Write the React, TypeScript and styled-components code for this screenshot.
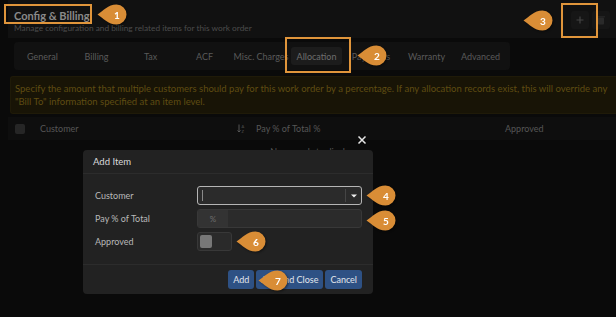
import React from "react";
import styled, { createGlobalStyle } from "styled-components";

const Global = createGlobalStyle`
  html, body { margin: 0; padding: 0; background: #0a0a0a; }
  body { font-family: Lato, "Open Sans", sans-serif; }
  * { box-sizing: border-box; }
  svg { display: block; }
`;

const Page = styled.div`
  position: relative;
  width: 616px;
  height: 317px;
  overflow: hidden;
  background: #0a0a0a;
  display: flex;
  flex-direction: column;
  padding-left: 8px;
`;

const Header = styled.div`
  height: 38px;
  background: #111111;
  display: flex;
  align-items: flex-start;
  justify-content: space-between;
  padding: 9px 6px 0 6px;
`;

const TitleBlock = styled.div`
  display: flex;
  flex-direction: column;
`;

const Title = styled.div`
  font-size: 11px;
  font-weight: 700;
  color: #8a8a8a;
  line-height: 13px;
`;

const Subtitle = styled.div`
  font-size: 8.3px;
  color: #4c4c4c;
  line-height: 12px;
`;

const Actions = styled.div`
  display: flex;
  gap: 3px;
  margin-top: 2px;
`;

const IconButton = styled.div`
  width: 18px;
  height: 18px;
  border-radius: 3px;
  background: #161616;
  display: flex;
  align-items: center;
  justify-content: center;
`;

const TabsRow = styled.div`
  margin: 4px 0 0 6px;
  width: 496px;
  height: 28px;
  background: #111111;
  border-radius: 4px;
  display: flex;
  align-items: center;
  padding-left: 2px;
  gap: 1px;
`;

const Tab = styled.div<{ $active?: boolean; $w: number }>`
  width: ${(p) => p.$w}px;
  height: 18px;
  border-radius: 3px;
  display: flex;
  align-items: center;
  justify-content: center;
  font-size: 9px;
  white-space: nowrap;
  color: ${(p) => (p.$active ? "#6e6e6e" : "#5a5a5a")};
  background: ${(p) => (p.$active ? "#1c1c1c" : "transparent")};
`;

const Warning = styled.div`
  margin: 6px 0 0 2px;
  height: 38px;
  background: #181406;
  border: 1px solid #1f1a08;
  border-right: none;
  border-radius: 3px 0 0 3px;
  padding: 5px 0 0 4px;
  font-size: 9.5px;
  line-height: 13px;
  color: #5f4c12;
  white-space: nowrap;
`;

const TableHeader = styled.div`
  margin-top: 3px;
  height: 23px;
  background: #0e0e0e;
  display: flex;
  align-items: center;
  font-size: 9px;
  color: #565656;
`;

const Check = styled.div`
  width: 10px;
  height: 10px;
  border-radius: 2px;
  background: #262626;
  margin-left: 7px;
  margin-right: 15px;
`;

const HeadCell = styled.div<{ $w: number }>`
  width: ${(p) => p.$w}px;
  display: flex;
  align-items: center;
  gap: 10px;
`;

const TableBody = styled.div`
  flex: 1;
  display: flex;
  justify-content: center;
  padding: 6px 0 0 0;
  font-size: 9px;
  color: #555;
`;

/* ---------- overlays ---------- */

const Dialog = styled.div`
  position: absolute;
  left: 83px;
  top: 150px;
  width: 290px;
  height: 144px;
  background: #222222;
  border-radius: 4px;
  display: flex;
  flex-direction: column;
`;

const DialogHead = styled.div`
  height: 24px;
  border-bottom: 1px solid #2c2c2c;
  padding: 0 10px;
  display: flex;
  align-items: center;
  font-size: 9.5px;
  color: #dadada;
`;

const DialogBody = styled.div`
  flex: 1;
  padding: 12px 11px 0 12px;
  display: flex;
  flex-direction: column;
  gap: 4px;
  border-bottom: 1px solid #2c2c2c;
`;

const FieldRow = styled.div`
  display: flex;
  align-items: center;
  height: 19px;
`;

const Label = styled.div`
  width: 102px;
  font-size: 9px;
  color: #b8b8b8;
`;

const Input = styled.div<{ $focused?: boolean }>`
  width: 165px;
  height: 19px;
  border-radius: 3px;
  background: #2b2b2b;
  border: 1px solid ${(p) => (p.$focused ? "#b5b5b5" : "#383838")};
  display: flex;
  align-items: center;
  overflow: hidden;
`;

const Caret = styled.div`
  width: 1px;
  height: 11px;
  background: #8a8a8a;
  margin-left: 4px;
`;

const Spacer = styled.div`
  flex: 1;
`;

const DropSep = styled.div`
  width: 1px;
  height: 13px;
  background: #454545;
`;

const DropArrow = styled.div`
  width: 15px;
  display: flex;
  justify-content: center;
`;

const Addon = styled.div`
  width: 30px;
  height: 100%;
  background: #333333;
  color: #6e6e6e;
  font-size: 8px;
  display: flex;
  align-items: center;
  justify-content: center;
`;

const Toggle = styled.div`
  width: 35px;
  height: 19px;
  border-radius: 3px;
  background: #2a2a2a;
  border: 1px solid #383838;
  padding: 2px;
  display: flex;
`;

const Knob = styled.div`
  width: 12px;
  height: 100%;
  border-radius: 2px;
  background: #777777;
`;

const DialogFoot = styled.div`
  height: 29px;
  display: flex;
  justify-content: flex-end;
  align-items: center;
  gap: 2px;
  padding: 0 11px 0 0;
`;

const Button = styled.div`
  height: 19px;
  padding: 0 5px;
  border-radius: 3px;
  background: #2e5184;
  color: #e2e6ec;
  font-size: 9px;
  display: flex;
  align-items: center;
`;

const Close = styled.div`
  position: absolute;
  left: 357px;
  top: 135px;
  width: 10px;
  height: 10px;
  display: flex;
`;

const Highlight = styled.div<{ $x: number; $y: number; $w: number; $h: number }>`
  position: absolute;
  left: ${(p) => p.$x}px;
  top: ${(p) => p.$y}px;
  width: ${(p) => p.$w}px;
  height: ${(p) => p.$h}px;
  border: 2px solid #e0953b;
`;

const MarkerWrap = styled.div<{ $x: number; $y: number }>`
  position: absolute;
  left: ${(p) => p.$x}px;
  top: ${(p) => p.$y}px;
  width: 30px;
  height: 21px;
  filter: drop-shadow(1px 1px 1px rgba(0, 0, 0, 0.45));
`;

const MarkerNum = styled.div`
  position: absolute;
  left: 10px;
  top: 0;
  width: 20px;
  height: 21px;
  display: flex;
  align-items: center;
  justify-content: center;
  font-size: 10px;
  font-weight: 700;
  color: #ffffff;
`;

function Marker({ x, y, n }: { x: number; y: number; n: number }) {
  return (
    <MarkerWrap $x={x} $y={y}>
      <svg width="30" height="21" viewBox="0 0 30 21">
        <path
          d="M0.5 10.5 C 6 7, 11 0.5, 19.5 0.5 A 10 10 0 1 1 19.5 20.5 C 11 20.5, 6 14, 0.5 10.5 Z"
          fill="#d98d36"
        />
      </svg>
      <MarkerNum>{n}</MarkerNum>
    </MarkerWrap>
  );
}

const tabs: [string, number][] = [
  ["General", 53],
  ["Billing", 53],
  ["Tax", 53],
  ["ACF", 53],
  ["Misc. Charges", 58],
  ["Allocation", 51],
  ["Payments", 56],
  ["Warranty", 53],
  ["Advanced", 53],
];

export default function App() {
  return (
    <>
      <Global />
      <Page>
        <Header>
          <TitleBlock>
            <Title>Config &amp; Billing</Title>
            <Subtitle>Manage configuration and billing related items for this work order</Subtitle>
          </TitleBlock>
          <Actions>
            <IconButton>
              <svg width="8" height="8" viewBox="0 0 8 8">
                <path d="M4 0.5V7.5M0.5 4H7.5" stroke="#444" strokeWidth="1.2" />
              </svg>
            </IconButton>
            <IconButton>
              <svg width="8" height="9" viewBox="0 0 8 9">
                <rect x="1" y="1.5" width="6" height="7" rx="0.8" fill="#2a2a2a" />
                <rect x="0" y="0.3" width="8" height="1" fill="#2a2a2a" />
              </svg>
            </IconButton>
          </Actions>
        </Header>

        <TabsRow>
          {tabs.map(([t, w]) => (
            <Tab key={t} $w={w} $active={t === "Allocation"}>
              {t}
            </Tab>
          ))}
        </TabsRow>

        <Warning>
          Specify the amount that multiple customers should pay for this work order by a percentage. If any
          allocation records exist, this will override any
          <br />
          "Bill To" information specified at an item level.
        </Warning>

        <TableHeader>
          <Check />
          <HeadCell $w={197}>Customer</HeadCell>
          <HeadCell $w={268}>
            <svg width="9" height="9" viewBox="0 0 9 9">
              <path d="M2 0.5V8M0.5 6.5L2 8L3.5 6.5" stroke="#555" strokeWidth="1" fill="none" />
              <text x="4.6" y="4" fontSize="4" fill="#555" fontFamily="Lato">A</text>
              <text x="4.6" y="8.6" fontSize="4" fill="#555" fontFamily="Lato">Z</text>
            </svg>
            Pay % of Total %
          </HeadCell>
          <HeadCell $w={80}>Approved</HeadCell>
        </TableHeader>
        <TableBody>No records to display</TableBody>

        <Close>
          <svg width="10" height="10" viewBox="0 0 10 10">
            <path d="M1.5 1.5L8.5 8.5M8.5 1.5L1.5 8.5" stroke="#e6e6e6" strokeWidth="1.5" />
          </svg>
        </Close>

        <Dialog>
          <DialogHead>Add Item</DialogHead>
          <DialogBody>
            <FieldRow>
              <Label>Customer</Label>
              <Input $focused>
                <Caret />
                <Spacer />
                <DropSep />
                <DropArrow>
                  <svg width="6" height="4" viewBox="0 0 6 4">
                    <path d="M0 0.5H6L3 3.5Z" fill="#f0f0f0" />
                  </svg>
                </DropArrow>
              </Input>
            </FieldRow>
            <FieldRow>
              <Label>Pay % of Total</Label>
              <Input>
                <Addon>%</Addon>
              </Input>
            </FieldRow>
            <FieldRow>
              <Label>Approved</Label>
              <Toggle>
                <Knob />
              </Toggle>
            </FieldRow>
          </DialogBody>
          <DialogFoot>
            <Button>Add</Button>
            <Button>Add and Close</Button>
            <Button>Cancel</Button>
          </DialogFoot>
        </Dialog>

        <Highlight $x={4} $y={4} $w={88} $h={20} />
        <Highlight $x={285} $y={37} $w={66} $h={36} />
        <Highlight $x={561} $y={3} $w={37} $h={35} />

        <Marker x={97} y={4} n={1} />
        <Marker x={357} y={45} n={2} />
        <Marker x={523} y={10} n={3} />
        <Marker x={366} y={185} n={4} />
        <Marker x={366} y={210} n={5} />
        <Marker x={236} y={231} n={6} />
        <Marker x={258} y={270} n={7} />
      </Page>
    </>
  );
}
